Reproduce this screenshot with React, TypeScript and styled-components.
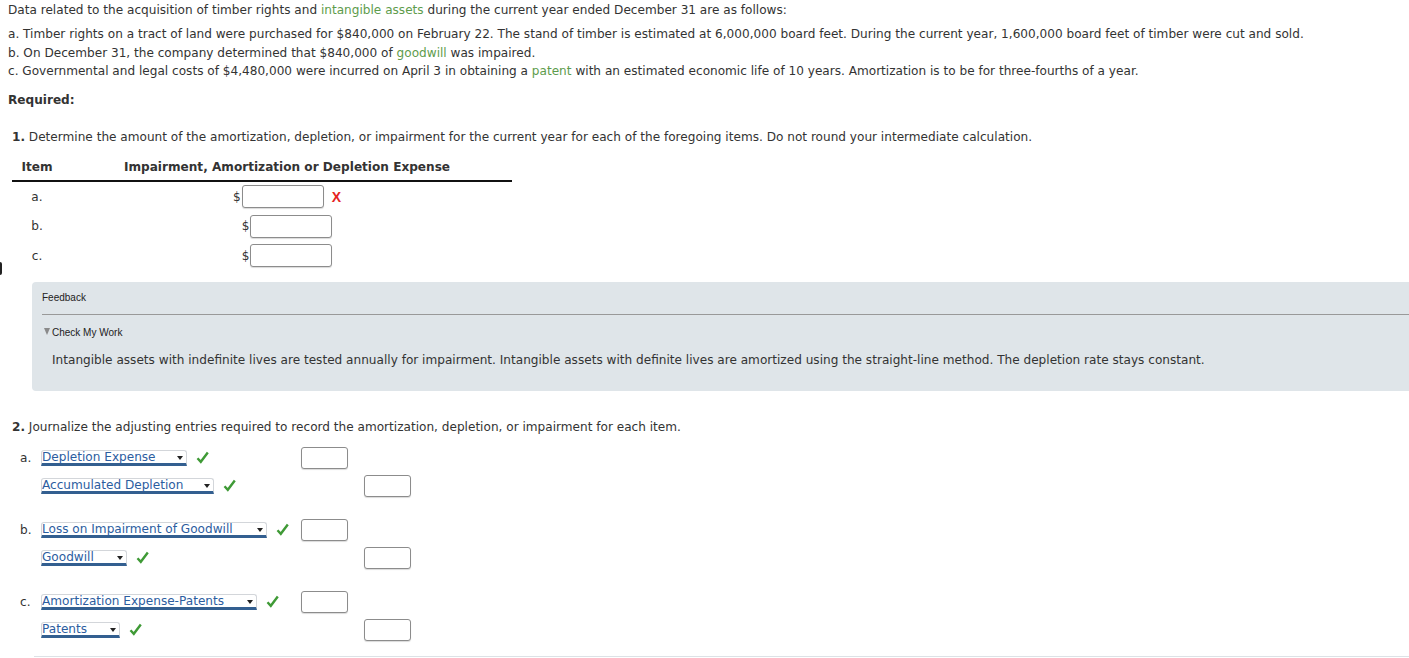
import React from "react";
import styled, { createGlobalStyle } from "styled-components";

const Global = createGlobalStyle`
  html, body { margin: 0; padding: 0; background: #fff; }
  body {
    font-family: "DejaVu Sans", Verdana, sans-serif;
    font-size: 12.1px;
    line-height: 18.5px;
    color: #333;
  }
`;

const Page = styled.div`
  position: relative;
  width: 1409px;
  box-sizing: border-box;
  padding: 1px 0 0 8px;
  overflow: hidden;
`;

const Para = styled.p`
  margin: 0;
`;

const Term = styled.span`
  color: #5e9c4c;
`;

const List = styled.div`
  margin-top: 5.5px;
`;

const Required = styled.div`
  margin-top: 10.5px;
  font-weight: bold;
`;

const Question = styled.div<{ $top: number }>`
  margin-top: ${(p) => p.$top}px;
  padding-left: 4px;
`;

const Num = styled.b`
  font-weight: bold;
`;

const Table = styled.div`
  margin: 8px 0 0 4px;
  width: 500px;
  display: grid;
  grid-template-columns: 50px 450px;
`;

const HeadCell = styled.div`
  font-weight: bold;
  text-align: center;
  padding: 3px 0 4px;
  border-bottom: 2px solid #111;
`;

const ItemCell = styled.div`
  height: 29.5px;
  display: flex;
  align-items: center;
  justify-content: center;
`;

const AmountCell = styled.div`
  height: 29.5px;
  display: flex;
  align-items: center;
  justify-content: center;
`;

const Dollar = styled.span`
  margin-right: 1px;
`;

const AmountInput = styled.div`
  width: 82px;
  height: 23px;
  box-sizing: border-box;
  border: 1px solid #8c8c8c;
  border-radius: 3px;
  background: #fff;
  box-shadow: 0 1px 1px rgba(0, 0, 0, 0.15);
`;

const Wrong = styled.span`
  margin-left: 8px;
  font-family: "Liberation Sans", Arial, sans-serif;
  font-weight: bold;
  font-size: 14px;
  color: #e5241f;
`;

const Feedback = styled.div`
  margin: 11px 0 0 24px;
  background: #dfe5e9;
  border-radius: 4px 0 0 4px;
  padding: 10px 0 21.75px 10px;
`;

const SmallLabel = styled.div`
  font-family: "Liberation Sans", Arial, sans-serif;
  font-size: 10px;
  line-height: 12px;
  color: #222;
`;

const FeedbackTitle = styled(SmallLabel)`
  padding-bottom: 10px;
  border-bottom: 1px solid #999;
`;

const CheckWork = styled(SmallLabel)`
  margin: 12px 0 0 2px;
  display: flex;
  align-items: center;
  gap: 2px;
`;

const Tri = styled.span`
  display: inline-block;
  width: 0;
  height: 0;
  margin-top: -2px;
  border-left: 3.5px solid transparent;
  border-right: 3.5px solid transparent;
  border-top: 7px solid #8a8a8a;
`;

const FeedbackText = styled.div`
  margin: 12px 0 0 10px;
`;

const Journal = styled.div`
  margin: 7.75px 0 0 4px;
  display: flex;
  flex-direction: column;
`;

const Group = styled.div`
  & + & {
    margin-top: 16px;
  }
`;

const JRow = styled.div`
  height: 28px;
  display: grid;
  grid-template-columns: 29px 260px 63px 47px;
  align-items: center;
`;

const Letter = styled.div`
  padding-left: 8px;
`;

const Account = styled.div`
  display: flex;
  align-items: center;
  gap: 9px;
`;

const Select = styled.div<{ $w: number }>`
  position: relative;
  width: ${(p) => p.$w}px;
  height: 16px;
  box-sizing: border-box;
  border: 1px solid #d3d6da;
  border-bottom: 3px solid #335f90;
  border-radius: 3px 3px 0 0;
  color: #2c5d9f;
  line-height: 13px;
  white-space: nowrap;
`;

const Arrow = styled.span`
  position: absolute;
  right: 3px;
  top: 5px;
  width: 0;
  height: 0;
  border-left: 3.5px solid transparent;
  border-right: 3.5px solid transparent;
  border-top: 4px solid #222;
`;

const EntryInput = styled.div<{ $col: number }>`
  grid-column: ${(p) => p.$col};
  width: 47px;
  height: 22px;
  box-sizing: border-box;
  border: 1px solid #8c8c8c;
  border-radius: 3px;
  background: #fff;
  box-shadow: 0 1px 1px rgba(0, 0, 0, 0.15);
`;

const Rule = styled.div`
  margin: 12px 0 0 26px;
  border-top: 1px solid #dde2e6;
`;

const EdgeMark = styled.div`
  position: absolute;
  left: 0;
  top: 262px;
  width: 2px;
  height: 13px;
  border-radius: 0 2px 2px 0;
  background: #222;
`;

const Check = () => (
  <svg width="13" height="13" viewBox="0 0 13 13">
    <path d="M1.5 7.2 L4.8 10.8 L11.8 1.5" fill="none" stroke="#3f9a36" strokeWidth="2.4" strokeLinejoin="miter" />
  </svg>
);

type Entry = { letter?: string; account: string; w: number; col: number };

const groups: Entry[][] = [
  [
    { letter: "a.", account: "Depletion Expense", w: 146, col: 3 },
    { account: "Accumulated Depletion", w: 173, col: 4 },
  ],
  [
    { letter: "b.", account: "Loss on Impairment of Goodwill", w: 226, col: 3 },
    { account: "Goodwill", w: 86, col: 4 },
  ],
  [
    { letter: "c.", account: "Amortization Expense-Patents", w: 216, col: 3 },
    { account: "Patents", w: 79, col: 4 },
  ],
];

const rows = [
  { item: "a.", wrong: true },
  { item: "b.", wrong: false },
  { item: "c.", wrong: false },
];

export default function App() {
  return (
    <>
      <Global />
      <Page>
        <EdgeMark />
        <Para>
          Data related to the acquisition of timber rights and <Term>intangible assets</Term> during the current year
          ended December 31 are as follows:
        </Para>
        <List>
          <Para>
            a. Timber rights on a tract of land were purchased for $840,000 on February 22. The stand of timber is
            estimated at 6,000,000 board feet. During the current year, 1,600,000 board feet of timber were cut and sold.
          </Para>
          <Para>
            b. On December 31, the company determined that $840,000 of <Term>goodwill</Term> was impaired.
          </Para>
          <Para>
            c. Governmental and legal costs of $4,480,000 were incurred on April 3 in obtaining a <Term>patent</Term> with
            an estimated economic life of 10 years. Amortization is to be for three-fourths of a year.
          </Para>
        </List>
        <Required>Required:</Required>
        <Question $top={18.5}>
          <Num>1.</Num> Determine the amount of the amortization, depletion, or impairment for the current year for each
          of the foregoing items. Do not round your intermediate calculation.
        </Question>
        <Table>
          <HeadCell>Item</HeadCell>
          <HeadCell>Impairment, Amortization or Depletion Expense</HeadCell>
          {rows.map((r) => (
            <React.Fragment key={r.item}>
              <ItemCell>{r.item}</ItemCell>
              <AmountCell>
                <Dollar>$</Dollar>
                <AmountInput />
                {r.wrong && <Wrong>X</Wrong>}
              </AmountCell>
            </React.Fragment>
          ))}
        </Table>
        <Feedback>
          <FeedbackTitle>Feedback</FeedbackTitle>
          <CheckWork>
            <Tri />Check My Work
          </CheckWork>
          <FeedbackText>
            Intangible assets with indefinite lives are tested annually for impairment. Intangible assets with definite
            lives are amortized using the straight-line method. The depletion rate stays constant.
          </FeedbackText>
        </Feedback>
        <Question $top={26.75}>
          <Num>2.</Num> Journalize the adjusting entries required to record the amortization, depletion, or impairment
          for each item.
        </Question>
        <Journal>
          {groups.map((g, gi) => (
            <Group key={gi}>
              {g.map((e) => (
                <JRow key={e.account}>
                  <Letter>{e.letter}</Letter>
                  <Account>
                    <Select $w={e.w}>
                      {e.account}
                      <Arrow />
                    </Select>
                    <Check />
                  </Account>
                  <EntryInput $col={e.col} />
                </JRow>
              ))}
            </Group>
          ))}
        </Journal>
        <Rule />
      </Page>
    </>
  );
}
